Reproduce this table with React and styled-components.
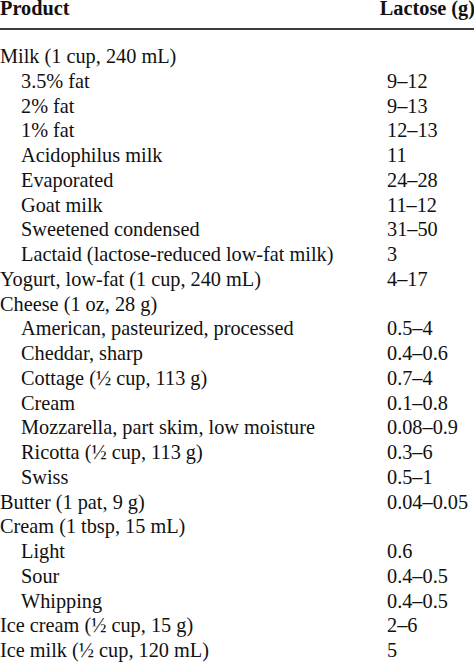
import React from "react";
import styled, { createGlobalStyle } from "styled-components";

const GlobalStyle = createGlobalStyle`
  html, body {
    margin: 0;
    padding: 0;
    background: #fff;
    overflow: hidden;
  }
  body {
    font-family: "Liberation Serif", "Times New Roman", serif;
    color: #111;
  }
`;

const rows = [
  { name: "Milk (1 cup, 240 mL)" },
  { name: "3.5% fat", value: "9–12", sub: true },
  { name: "2% fat", value: "9–13", sub: true },
  { name: "1% fat", value: "12–13", sub: true },
  { name: "Acidophilus milk", value: "11", sub: true },
  { name: "Evaporated", value: "24–28", sub: true },
  { name: "Goat milk", value: "11–12", sub: true },
  { name: "Sweetened condensed", value: "31–50", sub: true },
  { name: "Lactaid (lactose-reduced low-fat milk)", value: "3", sub: true },
  { name: "Yogurt, low-fat (1 cup, 240 mL)", value: "4–17" },
  { name: "Cheese (1 oz, 28 g)" },
  { name: "American, pasteurized, processed", value: "0.5–4", sub: true },
  { name: "Cheddar, sharp", value: "0.4–0.6", sub: true },
  { name: "Cottage (½ cup, 113 g)", value: "0.7–4", sub: true },
  { name: "Cream", value: "0.1–0.8", sub: true },
  { name: "Mozzarella, part skim, low moisture", value: "0.08–0.9", sub: true },
  { name: "Ricotta (½ cup, 113 g)", value: "0.3–6", sub: true },
  { name: "Swiss", value: "0.5–1", sub: true },
  { name: "Butter (1 pat, 9 g)", value: "0.04–0.05" },
  { name: "Cream (1 tbsp, 15 mL)" },
  { name: "Light", value: "0.6", sub: true },
  { name: "Sour", value: "0.4–0.5", sub: true },
  { name: "Whipping", value: "0.4–0.5", sub: true },
  { name: "Ice cream (½ cup, 15 g)", value: "2–6" },
  { name: "Ice milk (½ cup, 120 mL)", value: "5" },
];

const Table = styled.div`
  width: 474px;
  display: flex;
  flex-direction: column;
  font-size: 20.3px;
`;

const HeaderRow = styled.div`
  display: grid;
  grid-template-columns: 1fr auto;
  align-items: start;
  height: 28px;
  margin-right: -1px;
  border-bottom: 2px solid #3c3c3c;
  font-weight: bold;
  line-height: 16.7px;
`;

const HeaderCell = styled.div`
  text-align: ${(p) => (p.$right ? "right" : "left")};
  white-space: nowrap;
`;

const Body = styled.div`
  display: flex;
  flex-direction: column;
  padding-top: 14px;
`;

const Row = styled.div`
  display: grid;
  grid-template-columns: 387px 1fr;
  height: 24.75px;
  line-height: 24.75px;
`;

const Name = styled.div`
  padding-left: ${(p) => (p.$sub ? "21px" : "0")};
  white-space: nowrap;
`;

const Value = styled.div`
  white-space: nowrap;
`;

export default function App() {
  return (
    <>
      <GlobalStyle />
      <Table>
        <HeaderRow>
          <HeaderCell>Product</HeaderCell>
          <HeaderCell $right>Lactose (g)</HeaderCell>
        </HeaderRow>
        <Body>
          {rows.map((r, i) => (
            <Row key={i}>
              <Name $sub={r.sub}>{r.name}</Name>
              <Value>{r.value || ""}</Value>
            </Row>
          ))}
        </Body>
      </Table>
    </>
  );
}
